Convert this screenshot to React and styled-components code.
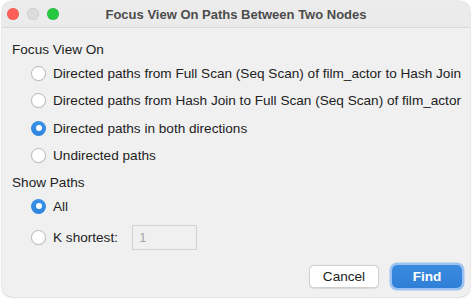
import React from "react";
import styled, { createGlobalStyle } from "styled-components";

const Global = createGlobalStyle`
  html, body { margin: 0; padding: 0; background: #ffffff; }
  body { font-family: "Liberation Sans", Arial, sans-serif; }
  * { box-sizing: border-box; }
`;

const Page = styled.div`
  width: 474px;
  height: 299px;
  padding: 1px 4px 2px 2px;
`;

const Window = styled.div`
  width: 468px;
  height: 296px;
  border-radius: 10px;
  background: #f0f0f0;
  box-shadow: 0 0 0 0.5px rgba(0,0,0,0.12), 0 1px 3px rgba(0,0,0,0.08);
  display: flex;
  flex-direction: column;
  overflow: hidden;
`;

const TitleBar = styled.div`
  height: 27px;
  flex: none;
  display: flex;
  align-items: center;
  position: relative;
  background: #ebebeb;
  border-bottom: 1px solid #d8d8d8;
  padding-left: 5px;
`;

const Lights = styled.div`
  display: flex;
  gap: 8px;
`;

const Light = styled.span`
  width: 12px;
  height: 12px;
  border-radius: 50%;
  background: ${(p) => p.$c};
  box-shadow: inset 0 0 0 0.5px rgba(0,0,0,0.12);
`;

const Title = styled.div`
  position: absolute;
  left: 0;
  right: 0;
  top: 0;
  bottom: 0;
  display: flex;
  align-items: center;
  justify-content: center;
  font-weight: bold;
  font-size: 13px;
  color: #4c4c4c;
  pointer-events: none;
`;

const Content = styled.div`
  flex: 1;
  display: flex;
  flex-direction: column;
  padding: 14px 8px 9px 10px;
`;

const SectionLabel = styled.div`
  font-size: 13.6px;
  line-height: 16px;
  color: #222;
  margin-top: ${(p) => p.$mt || 0}px;
  margin-bottom: 1.5px;
`;

const Row = styled.label`
  display: flex;
  align-items: center;
  height: 27.5px;
  padding-left: 19px;
  font-size: 13.6px;
  color: #222;
  white-space: nowrap;
  margin-top: ${(p) => p.$mt || 0}px;
`;

const Radio = styled.span`
  width: 15px;
  height: 15px;
  border-radius: 50%;
  flex: none;
  margin-right: 7px;
  display: flex;
  align-items: center;
  justify-content: center;
  background: ${(p) => (p.$on ? "linear-gradient(#3a92e8, #2d84dc)" : "#ffffff")};
  border: ${(p) => (p.$on ? "none" : "1px solid #b9b9b9")};
  box-shadow: ${(p) => (p.$on ? "none" : "0 0.5px 1px rgba(0,0,0,0.08)")};
  &::after {
    content: "";
    display: ${(p) => (p.$on ? "block" : "none")};
    width: 6px;
    height: 6px;
    border-radius: 50%;
    background: #fff;
  }
`;

const NumInput = styled.div`
  width: 65px;
  height: 25px;
  margin-left: 14px;
  border: 1px solid #d2d2d2;
  background: #f0f0f0;
  color: #a8a8a8;
  font-size: 13.6px;
  display: flex;
  align-items: center;
  padding-left: 6px;
`;

const Footer = styled.div`
  margin-top: auto;
  display: flex;
  justify-content: flex-end;
  gap: 13px;
  padding-right: 0;
`;

const Button = styled.button`
  height: 23px;
  width: ${(p) => p.$w}px;
  border-radius: 5px;
  font-family: inherit;
  font-size: 13.6px;
  display: flex;
  align-items: center;
  justify-content: center;
  padding: 0;
  background: ${(p) => (p.$primary ? "linear-gradient(#3a8be0, #2f7fd6)" : "#ffffff")};
  color: ${(p) => (p.$primary ? "#ffffff" : "#222")};
  font-weight: ${(p) => (p.$primary ? "bold" : "normal")};
  border: ${(p) => (p.$primary ? "none" : "1px solid #cfcfcf")};
  box-shadow: ${(p) =>
    p.$primary ? "0 0 0 2.5px rgba(90,160,240,0.55)" : "0 0.5px 1px rgba(0,0,0,0.1)"};
`;

export default function App() {
  return (
    <>
      <Global />
      <Page>
        <Window>
          <TitleBar>
            <Lights>
              <Light $c="#fe5f57" />
              <Light $c="#dcdcdc" />
              <Light $c="#27c840" />
            </Lights>
            <Title>Focus View On Paths Between Two Nodes</Title>
          </TitleBar>
          <Content>
            <SectionLabel>Focus View On</SectionLabel>
            <Row>
              <Radio />
              Directed paths from Full Scan (Seq Scan) of film_actor to Hash Join
            </Row>
            <Row>
              <Radio />
              Directed paths from Hash Join to Full Scan (Seq Scan) of film_actor
            </Row>
            <Row>
              <Radio $on />
              Directed paths in both directions
            </Row>
            <Row>
              <Radio />
              Undirected paths
            </Row>
            <SectionLabel $mt={5.5}>Show Paths</SectionLabel>
            <Row>
              <Radio $on />
              All
            </Row>
            <Row $mt={4}>
              <Radio />
              K shortest:
              <NumInput>1</NumInput>
            </Row>
            <Footer>
              <Button $w={70}>Cancel</Button>
              <Button $w={70} $primary>Find</Button>
            </Footer>
          </Content>
        </Window>
      </Page>
    </>
  );
}
